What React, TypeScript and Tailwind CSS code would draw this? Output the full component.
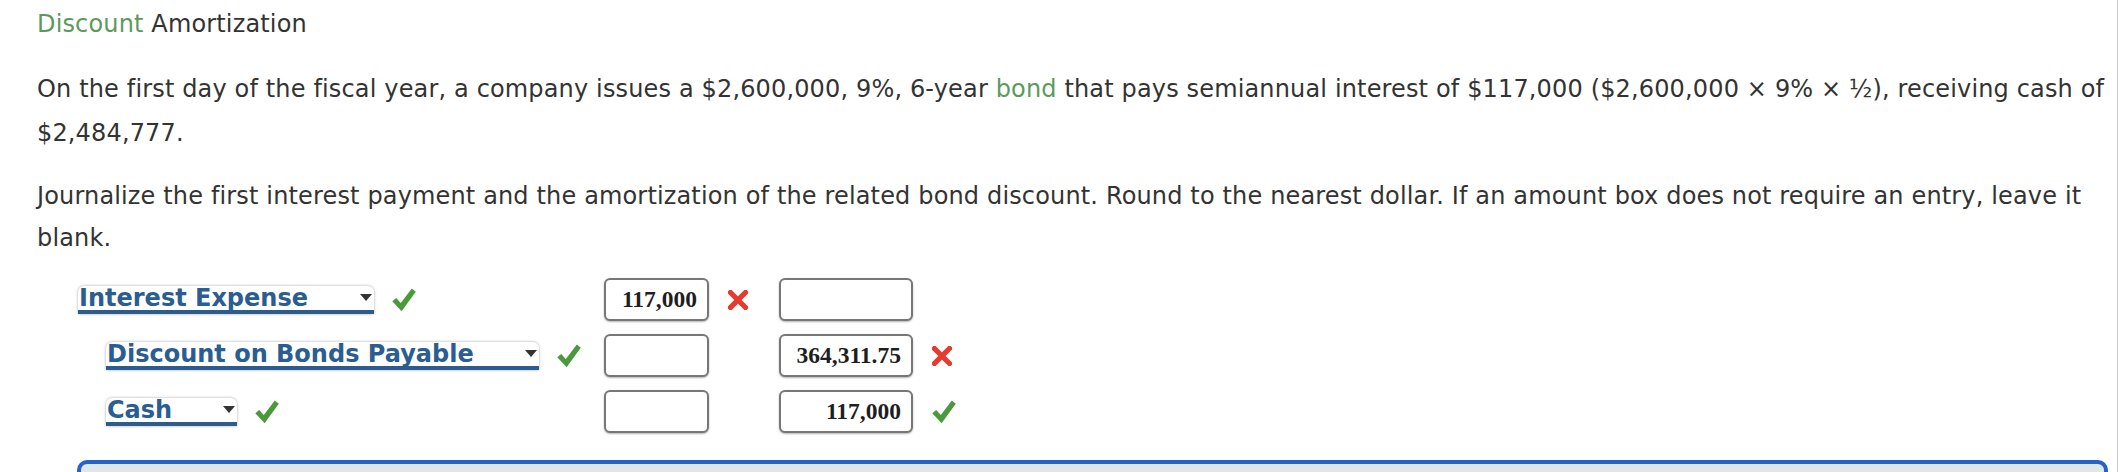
import React from "react";

const sans = { fontFamily: '"DejaVu Sans", Verdana, sans-serif' };
const serif = { fontFamily: '"Liberation Serif", "Times New Roman", serif' };

const Check = () => (
  <svg width="24" height="24" viewBox="0 0 24 24" className="shrink-0">
    <path d="M0.3 13.2 L4.2 10 L8.8 15 L19.8 0.6 L23.8 3.8 L9.6 23.2 Z" fill="#4a9a3b" />
  </svg>
);

const Cross = () => (
  <svg width="20" height="20" viewBox="0 0 20 20" className="shrink-0">
    <path d="M2.5 2.5 L17.5 17.5 M17.5 2.5 L2.5 17.5" stroke="#e63b2e" strokeWidth="5.2" strokeLinecap="square" />
  </svg>
);

const Select = ({ label, width }: { label: string; width: string }) => (
  <div
    className={`${width} h-[28px] shrink-0 flex items-start justify-between bg-white rounded-t-[6px] border-b-[4px] border-[#2c5c8c] shadow-[0_0_3px_rgba(0,0,0,0.35)] pl-[1px] pr-[2px]`}
  >
    <span className="text-[24px] font-bold text-[#2a5d92] leading-[24px] whitespace-nowrap" style={sans}>
      {label}
    </span>
    <svg width="12" height="8" viewBox="0 0 12 8" className="shrink-0 mt-[8px]">
      <path d="M0 0 L12 0 L6 7 Z" fill="#333" />
    </svg>
  </div>
);

const Box = ({ value, width }: { value?: string; width: string }) => (
  <div
    className={`${width} h-[43px] shrink-0 flex items-center justify-end pr-[10px] rounded-[6px] border-2 border-[#777] bg-white shadow-[0_1px_2px_rgba(0,0,0,0.3)]`}
  >
    <span className="text-[23.5px] font-bold text-[#1e1e1e] leading-none" style={serif}>
      {value}
    </span>
  </div>
);

const Mark = ({ kind }: { kind?: "check" | "cross" }) => (
  <div className="w-[70px] shrink-0 flex items-center pl-[19px]">
    {kind === "check" ? <Check /> : kind === "cross" ? <Cross /> : null}
  </div>
);

type Row = {
  account: string;
  selWidth: string;
  indent: string;
  debit?: string;
  debitMark?: "check" | "cross";
  credit?: string;
  creditMark?: "check" | "cross";
};

const rows: Row[] = [
  { account: "Interest Expense", selWidth: "w-[296px]", indent: "pl-[41px]", debit: "117,000", debitMark: "cross" },
  { account: "Discount on Bonds Payable", selWidth: "w-[433px]", indent: "pl-[69px]", credit: "364,311.75", creditMark: "cross" },
  { account: "Cash", selWidth: "w-[131px]", indent: "pl-[69px]", credit: "117,000", creditMark: "check" },
];

export default function App() {
  return (
    <div className="w-[2124px] h-[472px] overflow-hidden bg-white flex">
      <div className="w-[2118px] h-full border-r border-[#c8c8c8] pl-[37px] text-[#333]" style={sans}>
        <div className="pt-[3px] text-[24px] leading-[43px] tracking-[0.15px]">
          <span className="text-[#5c9a5c]">Discount</span> Amortization
        </div>

        <p className="mt-[21px] text-[24px] leading-[44px] tracking-[0.15px] pr-[6px]">
          On the first day of the fiscal year, a company issues a $2,600,000, 9%, 6-year{" "}
          <span className="text-[#5c9a5c]">bond</span> that pays semiannual interest of $117,000 ($2,600,000 × 9% × ½),
          receiving cash of $2,484,777.
        </p>

        <p className="mt-[20px] text-[24px] leading-[42px] tracking-[0.15px] pr-[6px]">
          Journalize the first interest payment and the amortization of the related bond discount. Round to the nearest
          dollar. If an amount box does not require an entry, leave it blank.
        </p>

        <div className="mt-[19px] flex flex-col gap-[13px]">
          {rows.map((r) => (
            <div key={r.account} className="flex items-center h-[43px]">
              <div className={`w-[567px] shrink-0 flex items-center gap-[18px] ${r.indent}`}>
                <Select label={r.account} width={r.selWidth} />
                <Check />
              </div>
              <Box value={r.debit} width="w-[105px]" />
              <Mark kind={r.debitMark} />
              <Box value={r.credit} width="w-[134px]" />
              <Mark kind={r.creditMark} />
            </div>
          ))}
        </div>

        <div className="mt-[27px] ml-[40px] w-[2031px] h-[60px] rounded-t-[10px] border-[4px] border-b-0 border-[#2563c8] bg-[#dfe7eb]" />
      </div>
    </div>
  );
}
